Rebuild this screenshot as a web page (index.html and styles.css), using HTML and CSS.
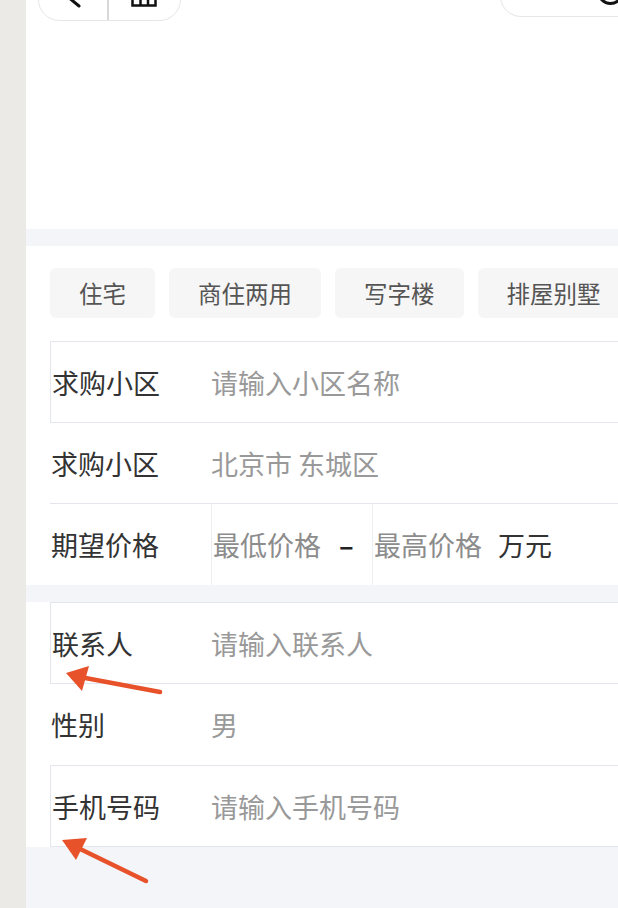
FILE: index.html
```html
<!DOCTYPE html>
<html lang="zh-CN">
<head>
<meta charset="utf-8">
<title>求购</title>
<link rel="stylesheet" href="styles.css">
</head>
<body>
<div class="app">
  <aside class="strip"></aside>
  <main class="page">
    <header class="nav">
      <div class="capsule capsule-left">
        <svg class="chev" width="20" height="30" viewBox="0 0 20 30"><polyline points="14,3 3,13 14,22" fill="none" stroke="#111" stroke-width="3" stroke-linecap="round" stroke-linejoin="round"/></svg>
        <span class="divider"></span>
        <svg class="grid" width="26" height="22" viewBox="0 0 26 22"><rect x="1.5" y="1.5" width="23" height="19" fill="none" stroke="#111" stroke-width="2.5"/><line x1="9.5" y1="11" x2="9.5" y2="21" stroke="#111" stroke-width="2.5"/><line x1="17" y1="11" x2="17" y2="21" stroke="#111" stroke-width="2.5"/><line x1="1" y1="11" x2="25" y2="11" stroke="#111" stroke-width="2.5"/></svg>
      </div>
      <div class="capsule capsule-right"><span class="ring"></span></div>
    </header>
    <div class="band"></div>
    <section class="types">
      <span class="tag">住宅</span>
      <span class="tag">商住两用</span>
      <span class="tag">写字楼</span>
      <span class="tag">排屋别墅</span>
    </section>
    <section class="form">
      <div class="row boxed"><span class="label">求购小区</span><span class="value">请输入小区名称</span></div>
      <div class="row lined"><span class="label">求购小区</span><span class="value">北京市 东城区</span></div>
      <div class="row"><span class="label">期望价格</span>
        <span class="price">最低价格</span><span class="dash">–</span><span class="price">最高价格</span><span class="unit">万元</span>
      </div>
    </section>
    <div class="band"></div>
    <section class="form">
      <div class="row boxed"><span class="label">联系人</span><span class="value">请输入联系人</span></div>
      <div class="row"><span class="label">性别</span><span class="value">男</span></div>
      <div class="row boxed"><span class="label">手机号码</span><span class="value">请输入手机号码</span></div>
    </section>
    <div class="footer"></div>
  </main>
  <svg class="arrows" width="618" height="908" viewBox="0 0 618 908">
    <line x1="160" y1="692" x2="80" y2="677" stroke="#e8522b" stroke-width="4.5" stroke-linecap="round"/>
    <polygon points="66,673 89,666 82,691" fill="#e8522b"/>
    <line x1="146" y1="881" x2="74" y2="846" stroke="#e8522b" stroke-width="4.5" stroke-linecap="round"/>
    <polygon points="62,840 87,838 76,860" fill="#e8522b"/>
  </svg>
</div>
</body>
</html>
```

FILE: styles.css
```css
* { box-sizing: border-box; }
html, body { margin: 0; padding: 0; }
body {
  font-family: "Noto Sans CJK SC", "Noto Sans", sans-serif;
  background: #ffffff;
  width: 618px;
  height: 908px;
  overflow: hidden;
}
.app {
  position: relative;
  display: flex;
  width: 618px;
  height: 908px;
  overflow: hidden;
}
.strip {
  width: 26px;
  flex: 0 0 26px;
  background: #ebeae6;
}
.page {
  flex: 1;
  display: flex;
  flex-direction: column;
  background: #fff;
  overflow: hidden;
}
.nav {
  height: 229px;
  flex: 0 0 229px;
  display: flex;
  align-items: flex-start;
}
.capsule {
  display: flex;
  align-items: center;
  height: 43px;
  border: 1.5px solid #e6e6e6;
  border-radius: 22px;
  background: #fff;
  flex: 0 0 auto;
}
.capsule-left {
  margin-left: 12px;
  margin-top: -22px;
  width: 143px;
  padding-left: 26px;
}
.chev { margin-top: -2px; }
.divider {
  width: 1.5px;
  height: 32px;
  background: #d8d8d8;
  margin-left: 22px;
  margin-top: 8px;
}
.grid { margin-left: 22px; margin-top: -8px; }
.capsule-right {
  margin-left: 319px;
  margin-top: -25px;
  width: 150px;
  height: 42px;
  padding-left: 96px;
}
.ring {
  width: 27px;
  height: 27px;
  border: 3px solid #111;
  border-radius: 50%;
  margin-top: -10px;
}
.band {
  height: 17px;
  flex: 0 0 17px;
  background: #f4f5f9;
}
.types {
  display: flex;
  gap: 14px;
  padding: 22px 0 23px 24px;
  white-space: nowrap;
}
.tag {
  flex: 0 0 auto;
  height: 50px;
  line-height: 50px;
  padding: 0 29px;
  background: #f6f6f6;
  border-radius: 6px;
  font-size: 23.5px;
  color: #555;
}
.form {
  margin-left: 24px;
  display: flex;
  flex-direction: column;
}
.row {
  display: flex;
  align-items: center;
  height: 81px;
  white-space: nowrap;
}
.row.boxed {
  border: 1px solid #e3e6ec;
  border-right: 0;
  height: 82px;
}
.row.lined {
  border-bottom: 1px solid #e3e6ec;
}
.label {
  width: 161px;
  flex: 0 0 161px;
  font-size: 27px;
  color: #333;
  padding-left: 1px;
}
.boxed .label { width: 160px; flex-basis: 160px; }
.value {
  font-size: 27px;
  color: #999;
}
.price {
  align-self: stretch;
  display: flex;
  align-items: center;
  width: 126px;
  flex: 0 0 126px;
  border-left: 1px solid #eceef2;
  font-size: 27px;
  color: #8c8c8c;
  padding-left: 1px;
}
.dash {
  width: 35px;
  flex: 0 0 35px;
  padding-left: 2px;
  font-size: 27px;
  font-weight: 700;
  color: #222;
}
.unit {
  font-size: 27px;
  color: #333;
  margin-left: 0;
}
.footer {
  flex: 1;
  background: #f4f5f9;
}
.arrows {
  position: absolute;
  left: 0;
  top: 0;
  pointer-events: none;
}
```
